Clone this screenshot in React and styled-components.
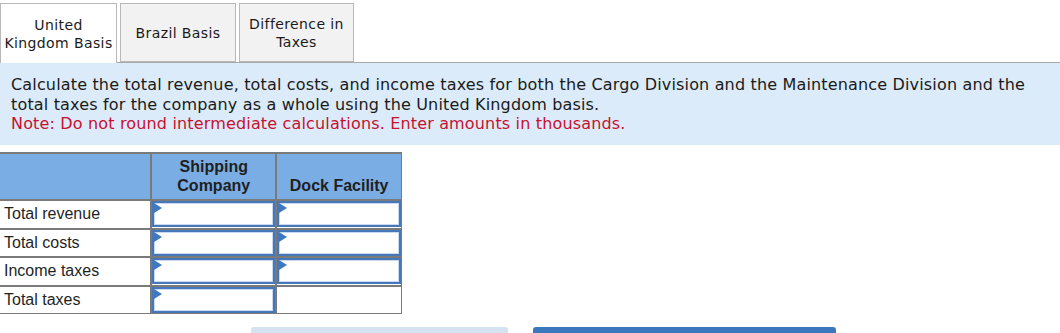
import React from "react";
import styled, { createGlobalStyle } from "styled-components";

const GlobalStyle = createGlobalStyle`
  html, body {
    margin: 0;
    padding: 0;
    background: #fff;
  }
  body {
    font-family: "DejaVu Sans", Verdana, sans-serif;
    color: #1a1a1a;
    overflow: hidden;
  }
`;

const tabs = ["United Kingdom Basis", "Brazil Basis", "Difference in Taxes"];

const rows = [
  { label: "Total revenue", inputs: [true, true] },
  { label: "Total costs", inputs: [true, true] },
  { label: "Income taxes", inputs: [true, true] },
  { label: "Total taxes", inputs: [true, false] },
];

function App() {
  return (
    <>
      <GlobalStyle />
      <Page>
        <TabBar>
          {tabs.map((t, i) => (
            <Tab key={t} active={i === 0}>
              {t}
            </Tab>
          ))}
        </TabBar>
        <Instructions>
          <p>
            Calculate the total revenue, total costs, and income taxes for both
            the Cargo Division and the Maintenance Division and the total taxes
            for the company as a whole using the United Kingdom basis.
          </p>
          <Note>
            Note: Do not round intermediate calculations. Enter amounts in
            thousands.
          </Note>
        </Instructions>
        <Grid>
          <colgroup>
            <col style={{ width: 151 }} />
            <col style={{ width: 125 }} />
            <col style={{ width: 125 }} />
          </colgroup>
          <thead>
            <tr>
              <HeadCell />
              <HeadCell>
                Shipping
                <br />
                Company
              </HeadCell>
              <HeadCell>Dock Facility</HeadCell>
            </tr>
          </thead>
          <tbody>
            {rows.map((r) => (
              <tr key={r.label}>
                <LabelCell>{r.label}</LabelCell>
                {r.inputs.map((has, j) => (
                  <InputCell key={j}>
                    {has && (
                      <Field>
                        <Marker />
                        <input type="text" />
                      </Field>
                    )}
                  </InputCell>
                ))}
              </tr>
            ))}
          </tbody>
        </Grid>
        <Buttons>
          <Button variant="light" width={257} />
          <Button variant="dark" width={303} />
        </Buttons>
      </Page>
    </>
  );
}

const Page = styled.div`
  width: 1060px;
  height: 333px;
  box-sizing: border-box;
  overflow: hidden;
  padding-top: 3px;
`;

const TabBar = styled.div`
  display: flex;
  gap: 3px;
  height: 59px;
  border-bottom: 1px solid #a9a9a9;
`;

const Tab = styled.div`
  box-sizing: border-box;
  width: 117px;
  height: ${(p) => (p.active ? "60px" : "59px")};
  display: flex;
  align-items: center;
  justify-content: center;
  text-align: center;
  font-size: 14px;
  letter-spacing: 0.4px;
  line-height: 18px;
  padding: 0 1px;
  border: 1px solid #b8b8b8;
  border-bottom: ${(p) => (p.active ? "none" : "1px solid #b8b8b8")};
  background: ${(p) => (p.active ? "#fff" : "#f2f2f2")};
  position: relative;
  z-index: 1;
  &:nth-child(2) {
    width: 116px;
  }
  &:nth-child(3) {
    width: 115px;
  }
`;

const Instructions = styled.div`
  background: #dbebf9;
  padding: 12px 11px 11.5px;
  font-size: 16px;
  letter-spacing: 0.16px;
  line-height: 19.5px;
  color: #1a1a1a;
  p {
    margin: 0;
  }
`;

const Note = styled.p`
  color: #c8102e;
`;

const Grid = styled.table`
  margin-top: 7px;
  border-collapse: collapse;
  table-layout: fixed;
  width: 402px;
  font-family: "Liberation Sans", Arial, sans-serif;
  font-size: 16px;
  border-top: 2px solid #7a7a7a;
`;

const HeadCell = styled.th`
  background: #7aade4;
  height: 43px;
  box-sizing: border-box;
  padding: 3px 2px 4px;
  vertical-align: bottom;
  text-align: center;
  font-weight: bold;
  line-height: 19px;
  color: #1f1f1f;
  border-left: 2px solid #7a7a7a;
  border-right: 1px solid #7a7a7a;
  &:first-child {
    border-left: none;
  }
`;

const LabelCell = styled.td`
  height: 26.5px;
  padding: 0 4px;
  border-top: 2px solid #7a7a7a;
  border-bottom: 1px solid #7a7a7a;
  color: #1f1f1f;
  line-height: 18px;
`;

const InputCell = styled.td`
  padding: 0;
  height: 26.5px;
  border: 1px solid #7a7a7a;
  border-left: 2px solid #7a7a7a;
  border-top: 2px solid #7a7a7a;
`;

const Field = styled.div`
  position: relative;
  height: 26px;
  box-sizing: border-box;
  border: 2px solid #4577b9;
  input {
    display: block;
    width: 100%;
    height: 100%;
    box-sizing: border-box;
    border: 1px solid #c7daf1;
    outline: none;
    background: #fff;
    font: inherit;
    padding: 0 6px;
  }
`;

const Marker = styled.span`
  position: absolute;
  left: 0;
  top: 0;
  width: 0;
  height: 0;
  border-top: 5px solid transparent;
  border-bottom: 5px solid transparent;
  border-left: 8px solid #3f78c2;
  z-index: 1;
`;

const Buttons = styled.div`
  display: flex;
  gap: 25px;
  padding-left: 251px;
  margin-top: 13px;
`;

const Button = styled.div`
  width: ${(p) => p.width}px;
  height: 36px;
  border-radius: 3px;
  background: ${(p) => (p.variant === "dark" ? "#3b77bc" : "#d5e2f2")};
`;

export default App;
